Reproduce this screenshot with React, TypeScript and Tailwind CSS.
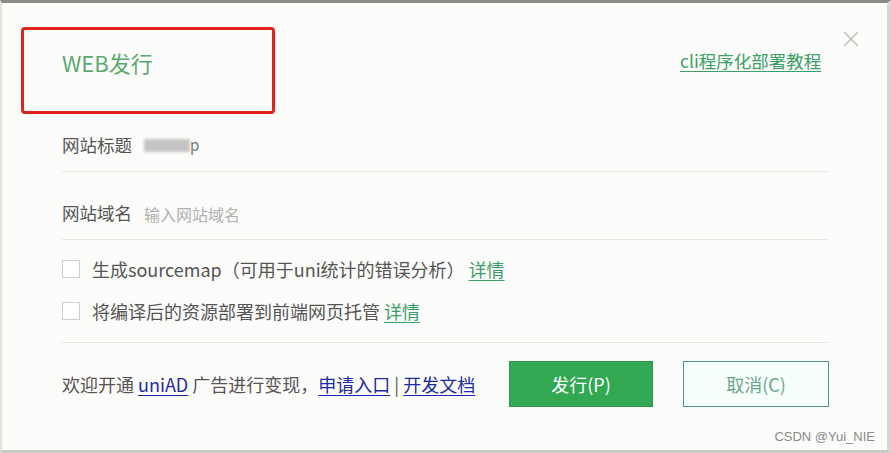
import { X } from "lucide-react";

const font = { fontFamily: '"Noto Sans CJK SC", "Noto Sans", sans-serif' };

function Checkbox() {
  return <span className="h-[18px] w-[18px] shrink-0 border border-[#cfcfcc] bg-white" />;
}

function Divider() {
  return <div className="h-px w-[766px] bg-[#e6e6e3]" />;
}

export default function App() {
  return (
    <div
      className="relative h-[453px] w-[891px] overflow-hidden border-t-[3px] border-l-2 border-r-[4px] border-b-[3px] border-t-[#8c8c86] border-l-[#e2e2de] border-r-[#d6d6d2] border-b-[#c9c9c5] bg-[#fcfcfa] text-[#555]"
      style={font}
    >
      {/* header */}
      <div className="flex items-start pt-[24px] pl-[19px]">
        <div className="h-[87px] w-[254px] rounded-[4px] border-[3px] border-[#e0231d] pt-[17px] pl-[38px]">
          <span className="text-[22px] leading-[30px] text-[#5aaa70]">WEB发行</span>
        </div>
        <a className="mt-[20px] ml-[405px] text-[17.5px] leading-[28px] text-[#3aa166] underline underline-offset-[3px]">
          cli程序化部署教程
        </a>
        <X className="-mt-[1px] ml-[17px] h-[26px] w-[26px] text-[#b8b8b4]" strokeWidth={1.1} />
      </div>

      {/* form */}
      <div className="flex flex-col pl-[60px]">
        <div className="flex h-[57px] items-center pt-[6px] text-[17.5px]">
          <span>网站标题</span>
          <span className="ml-[12px] h-[13px] w-[46px] bg-[#c4c4c2] blur-[1.5px]" />
          <span className="text-[15px] text-[#777]">p</span>
        </div>
        <Divider />
        <div className="flex h-[67px] items-center pt-[16px] text-[17.5px]">
          <span>网站域名</span>
          <span className="ml-[12px] text-[16px] text-[#b0b0ae]">输入网站域名</span>
        </div>
        <Divider />

        <div className="flex flex-col gap-[22px] pt-[19px] pb-[21px] text-[18px]">
          <div className="flex h-[20px] items-center gap-[12px]">
            <Checkbox />
            <span>
              生成sourcemap（可用于uni统计的错误分析）
              <a className="ml-[4px] text-[#3aa166] underline underline-offset-[3px]">详情</a>
            </span>
          </div>
          <div className="flex h-[20px] items-center gap-[12px]">
            <Checkbox />
            <span>
              将编译后的资源部署到前端网页托管
              <a className="ml-[4px] text-[#3aa166] underline underline-offset-[3px]">详情</a>
            </span>
          </div>
        </div>
        <Divider />

        <div className="flex w-[767px] items-center pt-[18px]">
          <span className="text-[18px]">
            欢迎开通 <a className="text-[#1d2aa6] underline underline-offset-[3px]">uniAD</a> 广告进行变现，
            <a className="text-[#1d2aa6] underline underline-offset-[3px]">申请入口</a> |{" "}
            <a className="text-[#1d2aa6] underline underline-offset-[3px]">开发文档</a>
          </span>
          <button className="ml-auto h-[46px] w-[144px] border border-[#2c9a4a] bg-[#33a853] text-[18px] text-white">
            发行(P)
          </button>
          <button className="ml-[30px] h-[46px] w-[146px] border-[1.5px] border-[#4e9c80] bg-[#f7fffb] text-[18px] text-[#6aa78a]">
            取消(C)
          </button>
        </div>
      </div>

      <span
        className="absolute right-[12px] bottom-[4px] text-[13px] text-[#8a8a8a]"
        style={{ fontFamily: '"Liberation Sans", Arial, sans-serif' }}
      >
        CSDN @Yui_NIE
      </span>
    </div>
  );
}
